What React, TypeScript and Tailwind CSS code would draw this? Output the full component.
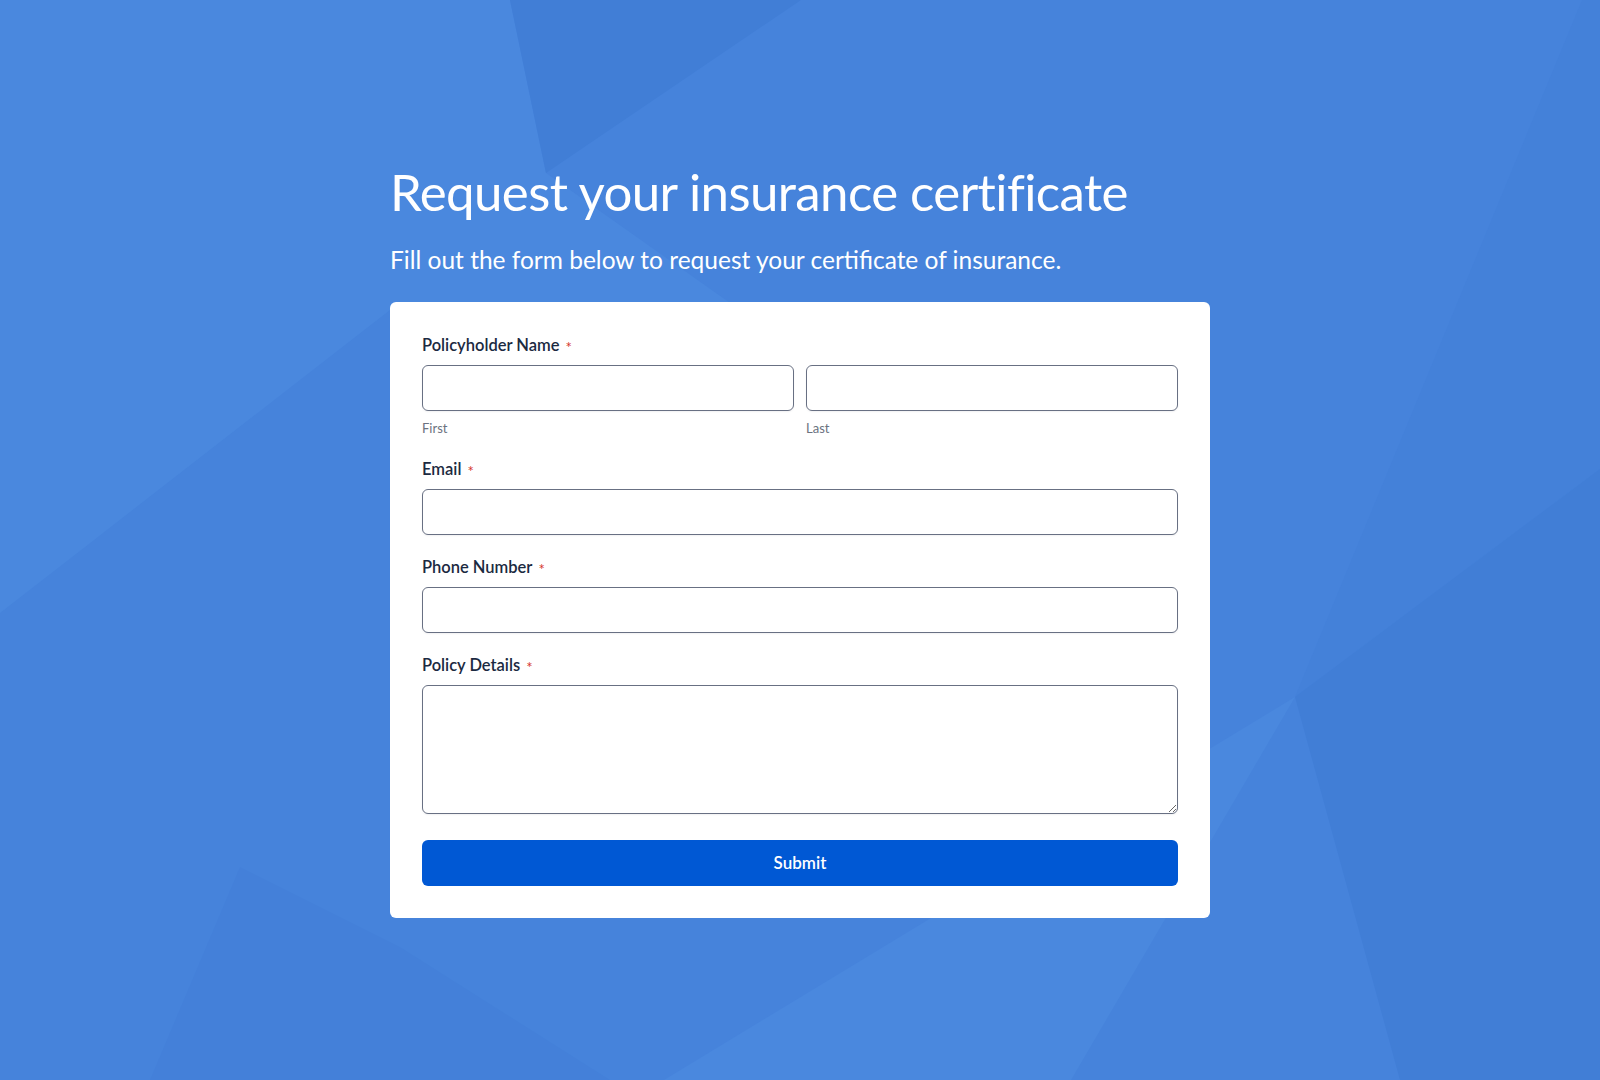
import type { ReactNode } from "react";

const font = { fontFamily: "Lato, 'Open Sans', sans-serif" };

function Backdrop() {
  return (
    <svg
      className="absolute inset-0 h-full w-full"
      viewBox="0 0 1600 1080"
      preserveAspectRatio="none"
      aria-hidden
    >
      <rect width="1600" height="1080" fill="#4683db" />
      <polygon points="0,0 510,0 546,173 740,310 390,310 0,613" fill="#4a88de" />
      <polygon points="510,0 801,0 546,173" fill="#417ed6" />
      <polygon points="1582,0 1600,0 1600,469 1295,697" fill="#4481d9" />
      <polygon points="1295,697 1600,469 1600,1080 1400,1080" fill="#417ed6" />
      <polygon points="1295,697 664,1080 1071,1080" fill="#4a88de" />
      <polygon points="150,1080 240,867 400,947 610,1080" fill="#4480d9" />
    </svg>
  );
}

function Label({ children, className = "" }: { children: ReactNode; className?: string }) {
  return (
    <div className={`flex items-center text-[16.5px] font-semibold leading-[22px] text-[#1b2a41] ${className}`}>
      {children}
      <span className="relative top-[2px] ml-[6px] text-[15px] font-normal leading-[22px] text-[#d5352b]">*</span>
    </div>
  );
}

const inputCls =
  "block h-[46px] w-full rounded-[6px] border border-[#687083] bg-white shadow-[0_1px_2px_rgba(15,23,42,0.06)] outline-none";

export default function App() {
  return (
    <div className="relative min-h-[1080px] w-full overflow-hidden" style={font}>
      <Backdrop />
      <div className="relative mx-auto flex w-[820px] flex-col pt-[160px]">
        <h1 className="text-[51px] font-normal leading-[64px] tracking-[-0.6px] text-white">
          Request your insurance certificate
        </h1>
        <p className="mt-[19px] text-[24.5px] leading-[34px] text-white">
          Fill out the form below to request your certificate of insurance.
        </p>
        <form className="mt-[25px] rounded-[6px] bg-white p-8" onSubmit={(e) => e.preventDefault()}>
          <Label>Policyholder Name</Label>
          <div className="mt-[9px] grid grid-cols-2 gap-3">
            <div>
              <input className={inputCls} />
              <div className="mt-2 text-[13px] leading-[18px] text-[#6b7280]">First</div>
            </div>
            <div>
              <input className={inputCls} />
              <div className="mt-2 text-[13px] leading-[18px] text-[#6b7280]">Last</div>
            </div>
          </div>

          <Label className="mt-[21px]">Email</Label>
          <input type="email" className={`${inputCls} mt-[9px]`} />

          <Label className="mt-[21px]">Phone Number</Label>
          <input type="tel" className={`${inputCls} mt-[9px]`} />

          <Label className="mt-[21px]">Policy Details</Label>
          <textarea className="mt-[9px] block h-[129px] w-full rounded-[6px] border border-[#687083] bg-white shadow-[0_1px_2px_rgba(15,23,42,0.06)] outline-none" />

          <button
            type="submit"
            className="mt-[26px] block h-[46px] w-full rounded-[6px] bg-[#0058d4] text-[17px] font-semibold text-white"
          >
            Submit
          </button>
        </form>
      </div>
    </div>
  );
}
